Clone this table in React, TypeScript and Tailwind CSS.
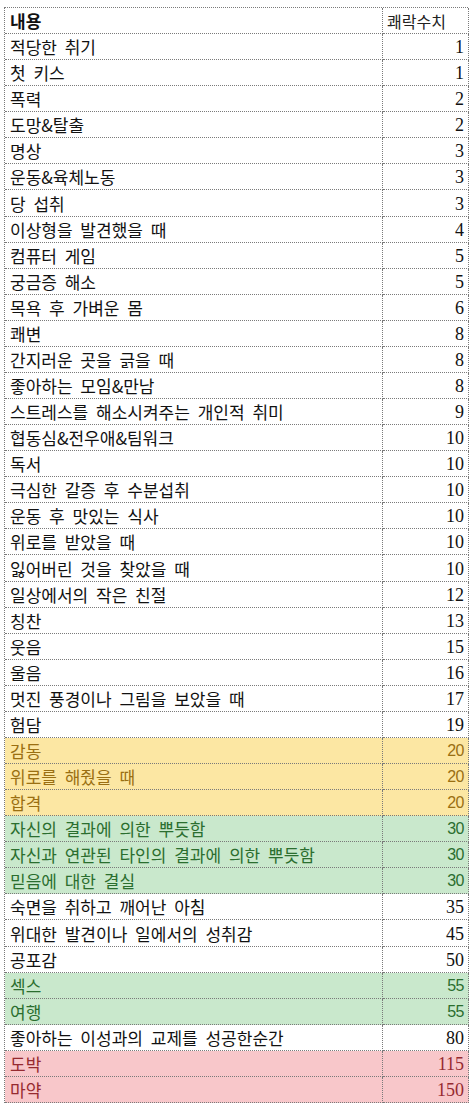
type Tone = "plain" | "yellow" | "green" | "red";

interface Row {
  label: string;
  value: number;
  tone?: Tone;
}

const rows: Row[] = [
  { label: "적당한 취기", value: 1 },
  { label: "첫 키스", value: 1 },
  { label: "폭력", value: 2 },
  { label: "도망&탈출", value: 2 },
  { label: "명상", value: 3 },
  { label: "운동&육체노동", value: 3 },
  { label: "당 섭취", value: 3 },
  { label: "이상형을 발견했을 때", value: 4 },
  { label: "컴퓨터 게임", value: 5 },
  { label: "궁금증 해소", value: 5 },
  { label: "목욕 후 가벼운 몸", value: 6 },
  { label: "쾌변", value: 8 },
  { label: "간지러운 곳을 긁을 때", value: 8 },
  { label: "좋아하는 모임&만남", value: 8 },
  { label: "스트레스를 해소시켜주는 개인적 취미", value: 9 },
  { label: "협동심&전우애&팀워크", value: 10 },
  { label: "독서", value: 10 },
  { label: "극심한 갈증 후 수분섭취", value: 10 },
  { label: "운동 후 맛있는 식사", value: 10 },
  { label: "위로를 받았을 때", value: 10 },
  { label: "잃어버린 것을 찾았을 때", value: 10 },
  { label: "일상에서의 작은 친절", value: 12 },
  { label: "칭찬", value: 13 },
  { label: "웃음", value: 15 },
  { label: "울음", value: 16 },
  { label: "멋진 풍경이나 그림을 보았을 때", value: 17 },
  { label: "험담", value: 19 },
  { label: "감동", value: 20, tone: "yellow" },
  { label: "위로를 해줬을 때", value: 20, tone: "yellow" },
  { label: "합격", value: 20, tone: "yellow" },
  { label: "자신의 결과에 의한 뿌듯함", value: 30, tone: "green" },
  { label: "자신과 연관된 타인의 결과에 의한 뿌듯함", value: 30, tone: "green" },
  { label: "믿음에 대한 결실", value: 30, tone: "green" },
  { label: "숙면을 취하고 깨어난 아침", value: 35 },
  { label: "위대한 발견이나 일에서의 성취감", value: 45 },
  { label: "공포감", value: 50 },
  { label: "섹스", value: 55, tone: "green" },
  { label: "여행", value: 55, tone: "green" },
  { label: "좋아하는 이성과의 교제를 성공한순간", value: 80 },
  { label: "도박", value: 115, tone: "red" },
  { label: "마약", value: 150, tone: "red" },
];

const toneClass: Record<Tone, string> = {
  plain: "bg-white text-[#111]",
  yellow: "bg-[#fce7a3] text-[#9a6f12]",
  green: "bg-[#c9e8cc] text-[#2b6e2f]",
  red: "bg-[#f8c7ca] text-[#962a30]",
};

const korean = "font-['Noto_Sans_CJK_KR',sans-serif]";
const cell = "border-r border-b border-dotted border-[#7a7a7a] flex items-end pb-[1px] overflow-hidden whitespace-nowrap";

export default function App() {
  return (
    <div className="min-h-[1112px] w-[474px] bg-white pl-[4px] pt-[7px]">
      <div className="grid h-[1096px] w-[464px] grid-cols-[378px_86px] grid-rows-[repeat(42,minmax(0,1fr))] border-t border-l border-dotted border-[#7a7a7a]">
        <div className={`${cell} ${korean} bg-white pl-[5px] text-[17px] leading-[22px] font-bold text-[#111]`}>내용</div>
        <div className={`${cell} ${korean} bg-white pl-[4px] text-[16px] leading-[22px] text-[#222]`}>쾌락수치</div>
        {rows.map((r) => {
          const tone = toneClass[r.tone ?? "plain"];
          const numFont =
            r.tone === "yellow" || r.tone === "green"
              ? "font-['Liberation_Sans',sans-serif] text-[16px] tracking-[-0.5px]"
              : "font-['Liberation_Serif',serif] text-[18px]";
          return (
            <div key={r.label} className="contents">
              <div className={`${cell} ${tone} ${korean} pl-[5px] text-[17px] leading-[22px] [word-spacing:4px]`}>
                {r.label}
              </div>
              <div className={`${cell} ${tone} ${numFont} justify-end pr-[4px] leading-[22px]`}>
                {r.value}
              </div>
            </div>
          );
        })}
      </div>
    </div>
  );
}
